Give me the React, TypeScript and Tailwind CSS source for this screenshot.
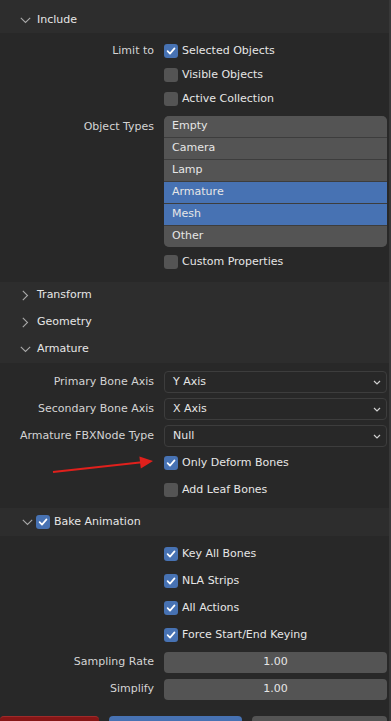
import React from 'react';

const ChevronDown = ({ className = '' }: { className?: string }) => (
  <svg width="11" height="7" viewBox="0 0 11 7" className={className}>
    <path d="M0.8 0.8 L5.5 5.5 L10.2 0.8" fill="none" stroke="#a8a8a8" strokeWidth="1.1" />
  </svg>
);

const ChevronRight = () => (
  <svg width="7" height="11" viewBox="0 0 7 11">
    <path d="M0.8 0.8 L5.5 5.5 L0.8 10.2" fill="none" stroke="#a8a8a8" strokeWidth="1.1" />
  </svg>
);

function Box({ checked }: { checked?: boolean }) {
  return (
    <div
      className={`w-[14px] h-[14px] rounded-[3px] shrink-0 flex items-center justify-center ${
        checked ? 'bg-[#4772b3]' : 'bg-[#545454]'
      }`}
    >
      {checked && (
        <svg width="10" height="10" viewBox="0 0 10 10">
          <path d="M1.6 5.2 L4 7.6 L8.5 2.4" fill="none" stroke="#ffffff" strokeWidth="1.7" strokeLinecap="round" strokeLinejoin="round" />
        </svg>
      )}
    </div>
  );
}

function Row({ label, h = 'h-[22px]', children }: { label?: string; h?: string; children: React.ReactNode }) {
  return (
    <div className={`flex items-center shrink-0 ${h}`}>
      <div className="w-[154px] shrink-0 text-right text-[#d4d4d4] whitespace-nowrap">{label}</div>
      <div className="flex-1 ml-[10px] mr-[2px] flex items-center">{children}</div>
    </div>
  );
}

function Check({ label, checked }: { label: string; checked?: boolean }) {
  return (
    <div className="flex items-center gap-[4px]">
      <Box checked={checked} />
      <span className="text-[#e6e6e6]">{label}</span>
    </div>
  );
}

function Header({ title, open, h = 'h-[27px]' }: { title: string; open?: boolean; h?: string }) {
  return (
    <div className={`flex items-center bg-[#2d2d2d] ${h}`}>
      <div className="w-[37px] flex justify-center pl-[17px] pr-[3px]">
        {open ? <ChevronDown /> : <ChevronRight />}
      </div>
      <span className="text-[#e6e6e6]">{title}</span>
    </div>
  );
}

function Select({ value }: { value: string }) {
  return (
    <div className="w-full h-[22px] rounded-[4px] border border-[#3d3d3d] bg-[#282828] flex items-center justify-between pl-[8px] pr-[5px] text-[#e6e6e6]">
      <span>{value}</span>
      <svg width="8" height="5" viewBox="0 0 8 5">
        <path d="M1 1 L4 4 L7 1" fill="none" stroke="#d0d0d0" strokeWidth="1.2" />
      </svg>
    </div>
  );
}

function Field({ value }: { value: string }) {
  return (
    <div className="w-full h-[21px] rounded-[4px] bg-[#545454] flex items-center justify-center text-[#e6e6e6]">
      {value}
    </div>
  );
}

const objectTypes = [
  { name: 'Empty', on: false },
  { name: 'Camera', on: false },
  { name: 'Lamp', on: false },
  { name: 'Armature', on: true },
  { name: 'Mesh', on: true },
  { name: 'Other', on: false },
];

export default function App() {
  return (
    <div className="relative w-[391px] h-[721px] overflow-hidden bg-[#282828] flex font-['DejaVu_Sans',sans-serif] text-[11px]">
      <div className="flex-1 min-w-0">
        {/* Include */}
        <Header title="Include" open h="h-[33px] pt-[7px]" />
        <div className="pt-[6px] pb-[8px]">
          <Row label="Limit to" h="h-[24px]">
            <Check label="Selected Objects" checked />
          </Row>
          <Row h="h-[24px]">
            <Check label="Visible Objects" />
          </Row>
          <Row h="h-[24px]">
            <Check label="Active Collection" />
          </Row>
          <div className="flex items-start mt-[5px]">
            <div className="w-[154px] shrink-0 h-[22px] flex items-center justify-end text-[#d4d4d4]">Object Types</div>
            <div className="flex-1 ml-[10px] mr-[2px] rounded-[5px] overflow-hidden bg-[#3d3d3d] flex flex-col gap-px">
              {objectTypes.map((t) => (
                <div
                  key={t.name}
                  className={`h-[21px] flex items-center pl-[8px] text-[#e6e6e6] ${t.on ? 'bg-[#4772b3]' : 'bg-[#545454]'}`}
                >
                  {t.name}
                </div>
              ))}
            </div>
          </div>
          <div className="mt-[3px]">
            <Row h="h-[24px]">
              <Check label="Custom Properties" />
            </Row>
          </div>
        </div>

        <Header title="Transform" />
        <Header title="Geometry" />
        <Header title="Armature" open />

        {/* Armature */}
        <div className="pt-[8px] pb-[7px] flex flex-col gap-[5px]">
          <Row label="Primary Bone Axis">
            <Select value="Y Axis" />
          </Row>
          <Row label="Secondary Bone Axis">
            <Select value="X Axis" />
          </Row>
          <Row label="Armature FBXNode Type">
            <Select value="Null" />
          </Row>
          <Row>
            <Check label="Only Deform Bones" checked />
          </Row>
          <Row>
            <Check label="Add Leaf Bones" />
          </Row>
        </div>

        {/* Bake Animation */}
        <div className="flex items-center bg-[#2d2d2d] h-[28px]">
          <div className="w-[36px] flex justify-end pr-[3px]">
            <ChevronDown />
          </div>
          <Box checked />
          <span className="ml-[4px] text-[#e6e6e6]">Bake Animation</span>
        </div>
        <div className="pt-[7px] flex flex-col gap-[5px]">
          <Row>
            <Check label="Key All Bones" checked />
          </Row>
          <Row>
            <Check label="NLA Strips" checked />
          </Row>
          <Row>
            <Check label="All Actions" checked />
          </Row>
          <Row>
            <Check label="Force Start/End Keying" checked />
          </Row>
          <Row label="Sampling Rate">
            <Field value="1.00" />
          </Row>
          <Row label="Simplify">
            <Field value="1.00" />
          </Row>
        </div>

        <div className="mt-[16px] flex gap-[10px] mr-[2px]">
          <div className="w-[99px] h-[26px] rounded-[4px] bg-[#861616] border-t border-[#a02a2a]" />
          <div className="w-[133px] h-[26px] rounded-[4px] bg-[#4772b3]" />
          <div className="flex-1 h-[26px] rounded-[4px] bg-[#545454]" />
        </div>
      </div>
      <div className="w-[2px] shrink-0 bg-[#383838]" />

      {/* annotation arrow */}
      <svg className="absolute left-0 top-0 pointer-events-none" width="391" height="721" viewBox="0 0 391 721">
        <line x1="53" y1="472" x2="142" y2="462.2" stroke="#e0201c" strokeWidth="2" />
        <polygon points="153,461 140.8,468.4 139.4,456.5" fill="#e0201c" />
      </svg>
    </div>
  );
}
